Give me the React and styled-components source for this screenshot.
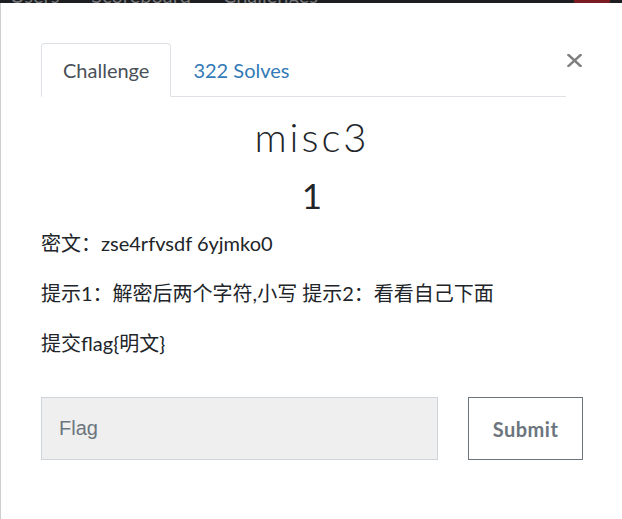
import styled, { createGlobalStyle } from 'styled-components';

const GlobalStyle = createGlobalStyle`
  html, body {
    margin: 0;
    padding: 0;
    background: #ffffff;
    overflow: hidden;
  }
  body {
    font-family: 'Lato', 'Noto Sans CJK SC', sans-serif;
    color: #212529;
  }
`;

const Page = styled.div`
  width: 622px;
  height: 519px;
  overflow: hidden;
  display: flex;
  flex-direction: column;
`;

// navbar behind the modal backdrop, only its bottom edge shows
const TopBar = styled.div`
  height: 3px;
  flex: none;
  overflow: hidden;
  background: #1c1e21;
  display: flex;
  align-items: flex-end;
  padding-left: 10px;
  gap: 32px;
`;

const TopLink = styled.span`
  font-size: 20px;
  line-height: 20px;
  margin-bottom: -2px;
  color: #77797c;
  white-space: nowrap;
`;

const TopBadge = styled.span`
  margin-left: auto;
  margin-right: 12px;
  width: 36px;
  height: 10px;
  margin-bottom: -4px;
  border-radius: 4px;
  background: #7a1a22;
`;

const Modal = styled.div`
  flex: 1;
  width: 624px;
  box-sizing: border-box;
  border-left: 1px solid #cfcfcf;
  border-right: 1px solid #cfcfcf;
  background: #fff;
  padding: 40px 40px 0 40px;
`;

const Header = styled.div`
  display: flex;
  align-items: flex-start;
`;

const Tabs = styled.nav`
  flex: 1;
  display: flex;
  border-bottom: 1px solid #dee2e6;
`;

const Tab = styled.a`
  display: block;
  padding: 11px 21px;
  margin-bottom: -1px;
  font-size: 20px;
  line-height: 30px;
  border: 1px solid ${(p) => (p.$active ? '#dee2e6' : 'transparent')};
  border-bottom-color: ${(p) => (p.$active ? '#fff' : 'transparent')};
  border-radius: 4px 4px 0 0;
  background: ${(p) => (p.$active ? '#fff' : 'transparent')};
  color: ${(p) => (p.$active ? '#495057' : '#337ab7')};
  text-decoration: none;
  cursor: pointer;
`;

const CloseButton = styled.button`
  width: 17px;
  height: 17px;
  margin-top: 9px;
  padding: 0;
  border: none;
  background: none;
  display: flex;
  align-items: center;
  justify-content: center;
  cursor: pointer;
`;

const Title = styled.h2`
  margin: 16px 0 13px;
  text-align: center;
  font-size: 40px;
  line-height: 48px;
  font-weight: 300;
  letter-spacing: 3px;
  color: #212529;
`;

const Value = styled.h3`
  margin: 0;
  text-align: center;
  font-size: 35px;
  line-height: 42px;
  font-weight: 400;
  color: #212529;
`;

const Description = styled.div`
  margin-top: 12px;
  padding-bottom: 19px;
`;

const Para = styled.p`
  margin: 0 0 20px;
  font-size: 20px;
  line-height: 30px;
`;

const Form = styled.form`
  display: flex;
  justify-content: space-between;
  align-items: stretch;
`;

const FlagInput = styled.input`
  width: 397px;
  height: 63px;
  box-sizing: border-box;
  padding: 0 17px;
  border: 1px solid #ced4da;
  background: #efefef;
  font-family: 'Liberation Sans', Arial, sans-serif;
  font-size: 20px;
  color: #495057;
  outline: none;

  &::placeholder {
    color: #6c757d;
  }
`;

const SubmitButton = styled.button`
  width: 115px;
  height: 63px;
  box-sizing: border-box;
  border: 1px solid #6c757d;
  background: #fff;
  font-family: 'Lato', sans-serif;
  font-size: 20px;
  font-weight: 700;
  letter-spacing: 0.5px;
  color: #6c757d;
  cursor: pointer;
`;

export default function App() {
  return (
    <Page>
      <GlobalStyle />
      <TopBar>
        <TopLink>Users</TopLink>
        <TopLink>Scoreboard</TopLink>
        <TopLink>Challenges</TopLink>
        <TopBadge />
      </TopBar>
      <Modal>
        <Header>
          <Tabs>
            <Tab $active>Challenge</Tab>
            <Tab>322 Solves</Tab>
          </Tabs>
          <CloseButton aria-label="Close">
            <svg width="15" height="13" viewBox="0 0 15 13">
              <path d="M1.5 1 L13.5 12 M13.5 1 L1.5 12" stroke="#7f7f7f" strokeWidth="2.4" strokeLinecap="square" fill="none" />
            </svg>
          </CloseButton>
        </Header>
        <Title>misc3</Title>
        <Value>1</Value>
        <Description>
          <Para>密文：zse4rfvsdf 6yjmko0</Para>
          <Para>提示1：解密后两个字符,小写 提示2：看看自己下面</Para>
          <Para>提交flag{'{'}明文{'}'}</Para>
        </Description>
        <Form onSubmit={(e) => e.preventDefault()}>
          <FlagInput type="text" placeholder="Flag" />
          <SubmitButton type="submit">Submit</SubmitButton>
        </Form>
      </Modal>
    </Page>
  );
}
